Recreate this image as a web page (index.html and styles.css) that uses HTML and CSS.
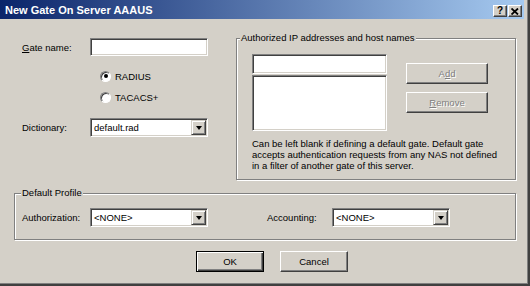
FILE: index.html
```html
<!DOCTYPE html>
<html lang="en">

<head>
    <meta charset="UTF-8">
    <meta name="viewport" content="width=device-width, initial-scale=1.0">
    <title>New Gate On Server AAAUS</title>
    <link rel="stylesheet" href="styles.css">
</head>

<body>
    <div class="window">
        <div class="titlebar">
            <span class="title">New Gate On Server AAAUS</span>
            <div class="caption-btns">
                <span class="cbtn">?</span>
                <span class="cbtn">
                    <svg width="8" height="7" viewBox="0 0 8 7">
                        <path d="M0.5 0.5 L7 6.5 M7 0.5 L0.5 6.5" stroke="#000" stroke-width="1.8" fill="none" />
                    </svg>
                </span>
            </div>
        </div>

        <div class="client">
            <div class="top">
                <div class="left">
                    <div class="field-row">
                        <label class="field-label"><u>G</u>ate name:</label>
                        <div class="edit gate-edit"></div>
                    </div>
                    <div class="radios">
                        <div class="radio">
                            <span class="radio-circle checked"></span>
                            <span>RADIUS</span>
                        </div>
                        <div class="radio">
                            <span class="radio-circle"></span>
                            <span>TACACS+</span>
                        </div>
                    </div>
                    <div class="field-row dict-row">
                        <label class="field-label">Dictionary:</label>
                        <div class="combo">
                            <span class="combo-value">default.rad</span>
                            <span class="combo-btn"><span class="arrow"></span></span>
                        </div>
                    </div>
                </div>

                <div class="group ip-group">
                    <div class="legend ip-legend">Authorized IP addresses and host names</div>
                    <div class="ip-body">
                        <div class="ip-lists">
                            <div class="edit ip-edit"></div>
                            <div class="edit ip-list"></div>
                        </div>
                        <div class="ip-buttons">
                            <button class="btn wide disabled" type="button">A<u>d</u>d</button>
                            <button class="btn wide disabled" type="button"><u>R</u>emove</button>
                        </div>
                    </div>
                    <p class="hint">
                        Can be left blank if defining a default gate. Default gate<br>
                        accepts authentication requests from any NAS not defined<br>
                        in a filter of another gate of this server.
                    </p>
                </div>
            </div>

            <div class="group profile-group">
                <div class="legend profile-legend">Default Profile</div>
                <div class="profile-row">
                    <label class="field-label">Authorization:</label>
                    <div class="combo">
                        <span class="combo-value">&lt;NONE&gt;</span>
                        <span class="combo-btn"><span class="arrow"></span></span>
                    </div>
                    <label class="field-label acct-label">Accounting:</label>
                    <div class="combo">
                        <span class="combo-value">&lt;NONE&gt;</span>
                        <span class="combo-btn"><span class="arrow"></span></span>
                    </div>
                </div>
            </div>

            <div class="actions">
                <button class="btn default" type="button">OK</button>
                <button class="btn" type="button">Cancel</button>
            </div>
        </div>
    </div>
</body>

</html>
```

FILE: styles.css
```css
body {
    margin: 0;
    font-family: "Liberation Sans", Arial, sans-serif;
    font-size: 9.5px;
    color: #000;
}

.window {
    width: 530px;
    height: 286px;
    box-sizing: border-box;
    background: #d4d0c8;
    border-right: 2px solid #404040;
    border-bottom: 2px solid #404040;
    box-shadow: inset -1px -1px 0 #808080;
    padding-right: 4px;
}

/* title bar */
.titlebar {
    height: 19px;
    display: flex;
    align-items: center;
    padding: 0 2px 0 5px;
    background: linear-gradient(to right, #0a246a, #a6caf0);
}

.title {
    flex: 1;
    color: #fff;
    font-weight: bold;
    font-size: 11px;
}

.caption-btns {
    display: flex;
    gap: 1px;
    align-self: flex-start;
    margin-top: 5px;
}

.cbtn {
    width: 14px;
    height: 12px;
    box-sizing: border-box;
    display: flex;
    align-items: center;
    justify-content: center;
    background: #d4d0c8;
    border: 1px solid;
    border-color: #fff #404040 #404040 #fff;
    box-shadow: inset -1px -1px 0 #808080;
    font-weight: bold;
    font-size: 10px;
    line-height: 1;
}

/* client area */
.client {
    padding: 19px 8px 0 14px;
}

.top {
    display: flex;
}

.left {
    width: 222px;
    padding-left: 8px;
    box-sizing: border-box;
}

.field-row {
    display: flex;
    align-items: center;
}

.field-label {
    width: 68px;
    flex-shrink: 0;
}

.edit {
    box-sizing: border-box;
    background: #fff;
    border: 1px solid;
    border-color: #808080 #fff #fff #808080;
    box-shadow: inset 1px 1px 0 #404040, inset -1px -1px 0 #d4d0c8;
}

.gate-edit {
    width: 118px;
    height: 18px;
}

.radios {
    display: flex;
    flex-direction: column;
    gap: 7px;
    margin: 13px 0 0 78px;
}

.radio {
    display: flex;
    align-items: center;
    gap: 4px;
    height: 14px;
}

.radio-circle {
    width: 11px;
    height: 11px;
    box-sizing: border-box;
    border-radius: 50%;
    background: #fff;
    border: 1px solid;
    border-color: #808080 #fff #fff #808080;
    box-shadow: inset 1px 1px 0 #404040;
    display: flex;
    align-items: center;
    justify-content: center;
}

.radio-circle.checked::after {
    content: "";
    width: 4px;
    height: 4px;
    border-radius: 50%;
    background: #000;
}

.dict-row {
    margin-top: 14px;
}

.combo {
    width: 118px;
    height: 19px;
    box-sizing: border-box;
    display: flex;
    align-items: center;
    justify-content: space-between;
    padding: 2px;
    background: #fff;
    border: 1px solid;
    border-color: #808080 #fff #fff #808080;
    box-shadow: inset 1px 1px 0 #404040, inset -1px -1px 0 #d4d0c8;
}

.combo-value {
    padding-left: 1px;
}

.combo-btn {
    width: 15px;
    height: 15px;
    margin: -1px -1px -1px 0;
    box-sizing: border-box;
    display: flex;
    align-items: center;
    justify-content: center;
    background: #d4d0c8;
    border: 1px solid;
    border-color: #d4d0c8 #404040 #404040 #d4d0c8;
    box-shadow: inset 1px 1px 0 #fff, inset -1px -1px 0 #808080;
}

.arrow {
    width: 0;
    height: 0;
    border-left: 3.5px solid transparent;
    border-right: 3.5px solid transparent;
    border-top: 4px solid #000;
}

/* group boxes */
.group {
    box-sizing: border-box;
    border: 1px solid #808080;
    box-shadow: inset 1px 1px 0 #fff, 1px 1px 0 #fff;
}

.legend {
    width: fit-content;
    margin-top: -7px;
    padding: 0 1px;
    line-height: 12px;
    background: #d4d0c8;
}

.ip-group {
    width: 280px;
    height: 142px;
}

.ip-legend {
    margin-left: 3px;
}

.ip-body {
    display: flex;
    margin: 10px 0 0 15px;
}

.ip-lists {
    display: flex;
    flex-direction: column;
    gap: 1px;
}

.ip-edit {
    width: 135px;
    height: 20px;
}

.ip-list {
    width: 135px;
    height: 56px;
}

.ip-buttons {
    display: flex;
    flex-direction: column;
    gap: 8px;
    margin: 9px 0 0 19px;
}

.hint {
    margin: 7px 0 0 15px;
    line-height: 11px;
}

.profile-group {
    width: 502px;
    height: 47px;
    margin-top: 13px;
}

.profile-legend {
    margin-left: 6px;
}

.profile-row {
    display: flex;
    align-items: center;
    margin-top: 9px;
    padding-left: 7px;
}

.acct-label {
    width: 65px;
    margin-left: 59px;
}

/* push buttons */
.btn {
    appearance: none;
    width: 68px;
    height: 21px;
    box-sizing: border-box;
    padding: 0;
    font: inherit;
    color: #000;
    background: #d4d0c8;
    border: 1px solid;
    border-color: #fff #404040 #404040 #fff;
    box-shadow: inset -1px -1px 0 #808080;
}

.btn.wide {
    width: 82px;
}

.btn.disabled {
    color: #808080;
    text-shadow: 1px 1px 0 #fff;
}

.btn.default {
    border-color: #000;
    box-shadow: inset 1px 1px 0 #fff, inset -1px -1px 0 #404040, inset -2px -2px 0 #808080;
}

.actions {
    display: flex;
    gap: 16px;
    margin-top: 11px;
    padding-left: 182px;
}
```
